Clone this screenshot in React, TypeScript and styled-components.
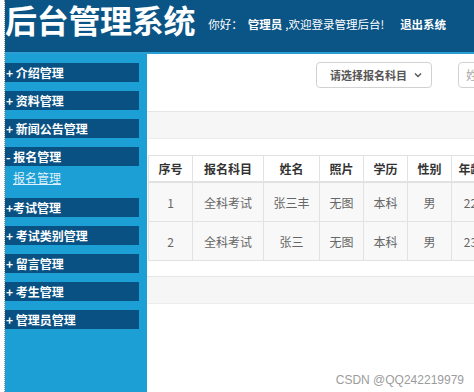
import React from 'react'
import styled, { createGlobalStyle } from 'styled-components'

const GlobalStyle = createGlobalStyle`
  html, body {
    margin: 0;
    padding: 0;
    background: #fff;
    font-family: "Liberation Sans", "Noto Sans CJK SC", sans-serif;
  }
`

const Frame = styled.div`
  position: relative;
  margin-left: 4px;
  width: 470px;
  height: 392px;
  border-left: 1px dotted #9a9a9a;
  box-sizing: border-box;
  overflow: hidden;
  display: flex;
  flex-direction: column;
`

const Header = styled.div`
  height: 52px;
  flex-shrink: 0;
  background: #0b5586;
  border-bottom: 2px solid #2a9fd4;
  display: flex;
  align-items: flex-start;
  color: #fff;
  white-space: nowrap;
`

const Title = styled.h1`
  margin: 0;
  padding-top: 1px;
  font-size: 32px;
  line-height: 36px;
  font-weight: 700;
  letter-spacing: -0.3px;
  font-family: "Noto Sans CJK SC", sans-serif;
`

const Greeting = styled.div`
  margin: 16px 0 0 13px;
  font-size: 11.5px;
  line-height: 16px;
  font-family: "Noto Sans CJK SC", sans-serif;
  display: flex;
`

const Strong = styled.b`
  font-weight: 700;
  margin: 0 3px 0 5px;
`

const Logout = styled.b`
  margin-left: 16px;
  font-weight: 700;
`

const Body = styled.div`
  flex: 1;
  display: flex;
  min-height: 0;
`

const Sidebar = styled.nav`
  width: 142px;
  flex-shrink: 0;
  background: #1c9fd4;
  padding: 9px 8px 0 0;
  box-sizing: border-box;
  display: flex;
  flex-direction: column;
`

const MenuBar = styled.div`
  height: 19px;
  margin-bottom: 9px;
  background: #0a5183;
  color: #fff;
  font-size: 12px;
  font-weight: 700;
  line-height: 19px;
  padding-left: 1px;
  font-family: "Noto Sans CJK SC", sans-serif;
  white-space: pre;
`

const SubLink = styled.a`
  display: block;
  margin: -6px 0 11px 8px;
  color: #dff0fb;
  font-size: 12px;
  line-height: 18px;
  text-decoration: underline;
  font-family: "Noto Sans CJK SC", sans-serif;
`

const Main = styled.main`
  flex: 1;
  background: #fff;
  overflow: hidden;
  display: flex;
  flex-direction: column;
`

const Toolbar = styled.div`
  height: 57px;
  flex-shrink: 0;
  padding: 8px 0 0 169px;
  box-sizing: border-box;
  display: flex;
  gap: 26px;
  white-space: nowrap;
`

const Select = styled.div`
  width: 116px;
  height: 26px;
  flex-shrink: 0;
  box-sizing: border-box;
  border: 1px solid #d2d2d2;
  border-radius: 4px;
  display: flex;
  align-items: center;
  padding: 0 9px 0 13px;
  justify-content: space-between;
  color: #555;
  font-size: 11px;
  font-weight: 700;
  font-family: "Noto Sans CJK SC", sans-serif;
`

const SearchInput = styled.div`
  width: 120px;
  height: 26px;
  flex-shrink: 0;
  box-sizing: border-box;
  border: 1px solid #d2d2d2;
  border-radius: 4px;
  padding-left: 7px;
  line-height: 24px;
  color: #aaa;
  font-size: 12px;
  font-family: "Noto Sans CJK SC", sans-serif;
`

const Band = styled.div<{ $h: number }>`
  height: ${p => p.$h}px;
  flex-shrink: 0;
  background: #f6f6f6;
  border-top: 1px solid #e6e6e6;
  border-bottom: 1px solid #ececec;
  box-sizing: border-box;
`

const TableWrap = styled.div`
  padding: 16px 0 15px 1px;
`

const Table = styled.table`
  border-collapse: collapse;
  table-layout: fixed;
  width: 341px;
  font-family: "Noto Sans CJK SC", sans-serif;
  font-size: 12px;
  text-align: center;
`

const Th = styled.th`
  height: 25px;
  padding: 0;
  border: 1px solid #e2e2e2;
  border-bottom-width: 2px;
  color: #333;
  font-weight: 700;
  background: #fff;
  white-space: nowrap;
`

const Td = styled.td`
  height: 38px;
  padding: 0;
  border: 1px solid #e2e2e2;
  color: #666;
  background: #f8f8f8;
`

const Watermark = styled.div`
  position: absolute;
  right: 10px;
  bottom: 5px;
  color: #9c9c9c;
  font-size: 12px;
  font-family: "Liberation Sans", sans-serif;
`

const Chevron = () => (
  <svg width="8" height="6" viewBox="0 0 8 6">
    <path d="M1 1.5 L4 4.5 L7 1.5" fill="none" stroke="#555" strokeWidth="1.4" />
  </svg>
)

const menus = ['+ 介绍管理', '+ 资料管理', '+ 新闻公告管理', '- 报名管理']
const menus2 = ['+考试管理', '+ 考试类别管理', '+ 留言管理', '+ 考生管理', '+ 管理员管理']

const cols: [string, number][] = [
  ['序号', 44],
  ['报名科目', 71],
  ['姓名', 56],
  ['照片', 44],
  ['学历', 44],
  ['性别', 44],
  ['年龄', 38],
]

const rows = [
  ['1', '全科考试', '张三丰', '无图', '本科', '男', '22'],
  ['2', '全科考试', '张三', '无图', '本科', '男', '23'],
]

export default function App() {
  return (
    <>
      <GlobalStyle />
      <Frame>
        <Header>
          <Title>后台管理系统</Title>
          <Greeting>
            <span>你好：</span>
            <Strong>管理员</Strong>
            <span>,欢迎登录管理后台!</span>
            <Logout>退出系统</Logout>
          </Greeting>
        </Header>
        <Body>
          <Sidebar>
            {menus.map(m => (
              <MenuBar key={m}>{m}</MenuBar>
            ))}
            <SubLink href="#">报名管理</SubLink>
            {menus2.map(m => (
              <MenuBar key={m}>{m}</MenuBar>
            ))}
          </Sidebar>
          <Main>
            <Toolbar>
              <Select>
                <span>请选择报名科目</span>
                <Chevron />
              </Select>
              <SearchInput>姓名</SearchInput>
            </Toolbar>
            <Band $h={28} />
            <TableWrap>
              <Table>
                <colgroup>
                  {cols.map(([c, w]) => (
                    <col key={c} style={{ width: w }} />
                  ))}
                </colgroup>
                <thead>
                  <tr>
                    {cols.map(([c]) => (
                      <Th key={c}>{c}</Th>
                    ))}
                  </tr>
                </thead>
                <tbody>
                  {rows.map(r => (
                    <tr key={r[0]}>
                      {r.map((v, i) => (
                        <Td key={i}>{v}</Td>
                      ))}
                    </tr>
                  ))}
                </tbody>
              </Table>
            </TableWrap>
            <Band $h={28} />
          </Main>
        </Body>
        <Watermark>CSDN @QQ242219979</Watermark>
      </Frame>
    </>
  )
}
